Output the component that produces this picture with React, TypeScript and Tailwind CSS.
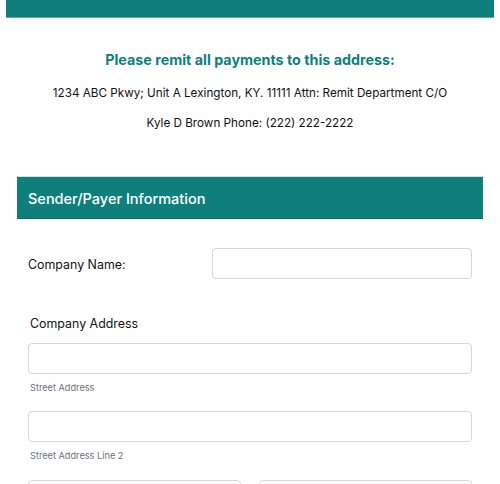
export default function App() {
  return (
    <div className="w-[500px] h-[484px] overflow-hidden bg-white" style={{ fontFamily: "Inter, 'Noto Sans', sans-serif" }}>
      <div className="mx-[6px] h-[18px] bg-[#0f7f7c] border-b border-[#5aaaa7]" />
      <div className="pt-[33px] flex flex-col items-center text-center">
        <h1 className="text-[14.3px] leading-[18px] font-bold text-[#0f7f7c]">Please remit all payments to this address:</h1>
        <p className="mt-[16px] text-[11.7px] leading-[16px] text-[#111]">1234 ABC Pkwy; Unit A Lexington, KY. 11111 Attn: Remit Department C/O</p>
        <p className="mt-[14px] text-[11.7px] leading-[16px] text-[#111]">Kyle D Brown Phone: (222) 222-2222</p>
      </div>
      <div className="mx-[17px] mt-[45px] h-[43px] bg-[#0f7f7c] border-t border-t-[#d4dedd] border-b border-b-[#0b6966] flex items-center px-[11px] pt-[2px]">
        <h2 className="text-[14.5px] font-medium text-white">Sender/Payer Information</h2>
      </div>
      <div className="px-[28px]">
        <div className="mt-[29px] flex items-center">
          <label className="w-[184px] pt-[3px] text-[12.4px] text-[#111]">Company Name:</label>
          <div className="flex-1 h-[31px] rounded-[4px] border border-[#d3d6dc]" />
        </div>
        <div className="mt-[37px] pl-[2px] text-[12.4px] leading-[16px] text-[#111]">Company Address</div>
        <div className="mt-[11px] h-[31px] rounded-[4px] border border-[#d3d6dc]" />
        <div className="mt-[8px] pl-[2px] text-[9.2px] leading-[11px] text-[#6b7280]">Street Address</div>
        <div className="mt-[18px] h-[31px] rounded-[4px] border border-[#d3d6dc]" />
        <div className="mt-[8px] pl-[2px] text-[9.2px] leading-[11px] text-[#6b7280]">Street Address Line 2</div>
        <div className="mt-[19px] flex gap-[18px]">
          <div className="flex-1 h-[31px] rounded-[4px] border border-[#d3d6dc]" />
          <div className="flex-1 h-[31px] rounded-[4px] border border-[#d3d6dc]" />
        </div>
      </div>
    </div>
  );
}
